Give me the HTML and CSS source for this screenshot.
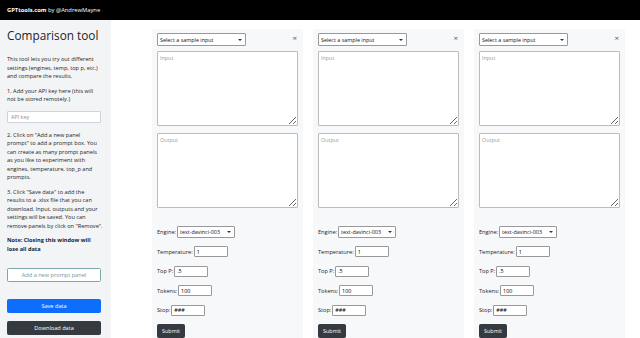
FILE: index.html
```html
<!DOCTYPE html>
<html>
<head>
<meta charset="utf-8">
<link rel="stylesheet" href="styles.css">
</head>
<body>
<div class="topbar"><b>GPTtools.com</b>&nbsp;by @AndrewMayne</div>
<div class="main">
  <aside class="sidebar">
    <h1 class="title">Comparison tool</h1>
    <p class="para">This tool lets you try out different settings (engines, temp, top p, etc.) and compare the results.</p>
    <p class="para">1. Add your API key here (this will not be stored remotely.)</p>
    <input class="api" type="text" placeholder="API key">
    <p class="para">2. Click on "Add a new panel prompt" to add a prompt box. You can create as many prompt panels as you like to experiment with engines, temperature, top_p and prompts.</p>
    <p class="para">3. Click "Save data" to add the results to a .xlsx file that you can download. Input, outputs and your settings will be saved. You can remove panels by click on "Remove".</p>
    <p class="para note">Note: Closing this window will lose all data</p>
    <button class="btn btn-outline">Add a new prompt panel</button>
    <button class="btn btn-blue">Save data</button>
    <button class="btn btn-dark">Download data</button>
  </aside>
  <section class="panels">
    <div class="panel">
      <div class="panel-head">
        <span class="selwrap sample"><select><option>Select a sample input</option></select></span>
        <span class="close">×</span>
      </div>
      <textarea class="area" placeholder="Input"></textarea>
      <textarea class="area" placeholder="Output"></textarea>
      <div class="settings">
        <div class="row"><label>Engine:</label><span class="selwrap engine"><select><option>text-davinci-003</option></select></span></div>
        <div class="row"><label>Temperature:</label><input class="field" type="text" value="1"></div>
        <div class="row"><label>Top P:</label><input class="field" type="text" value=".5"></div>
        <div class="row"><label>Tokens:</label><input class="field" type="text" value="100"></div>
        <div class="row"><label>Stop:</label><input class="field" type="text" value="###"></div>
        <button class="submit">Submit</button>
      </div>
    </div>
    <div class="panel">
      <div class="panel-head">
        <span class="selwrap sample"><select><option>Select a sample input</option></select></span>
        <span class="close">×</span>
      </div>
      <textarea class="area" placeholder="Input"></textarea>
      <textarea class="area" placeholder="Output"></textarea>
      <div class="settings">
        <div class="row"><label>Engine:</label><span class="selwrap engine"><select><option>text-davinci-003</option></select></span></div>
        <div class="row"><label>Temperature:</label><input class="field" type="text" value="1"></div>
        <div class="row"><label>Top P:</label><input class="field" type="text" value=".5"></div>
        <div class="row"><label>Tokens:</label><input class="field" type="text" value="100"></div>
        <div class="row"><label>Stop:</label><input class="field" type="text" value="###"></div>
        <button class="submit">Submit</button>
      </div>
    </div>
    <div class="panel">
      <div class="panel-head">
        <span class="selwrap sample"><select><option>Select a sample input</option></select></span>
        <span class="close">×</span>
      </div>
      <textarea class="area" placeholder="Input"></textarea>
      <textarea class="area" placeholder="Output"></textarea>
      <div class="settings">
        <div class="row"><label>Engine:</label><span class="selwrap engine"><select><option>text-davinci-003</option></select></span></div>
        <div class="row"><label>Temperature:</label><input class="field" type="text" value="1"></div>
        <div class="row"><label>Top P:</label><input class="field" type="text" value=".5"></div>
        <div class="row"><label>Tokens:</label><input class="field" type="text" value="100"></div>
        <div class="row"><label>Stop:</label><input class="field" type="text" value="###"></div>
        <button class="submit">Submit</button>
      </div>
    </div>
  </section>
</div>
</body>
</html>
```
FILE: styles.css
```css
* { box-sizing: border-box; }
html, body { margin: 0; padding: 0; overflow: hidden; }
body {
  font-family: "Open Sans", "Noto Sans", sans-serif;
  font-size: 5.6px;
  color: #212529;
  background: #fff;
  height: 338px;
}
.topbar {
  height: 20px;
  background: #000;
  color: #fff;
  font-size: 5.8px;
  display: flex;
  align-items: center;
  padding-left: 7px;
}
.topbar b { font-weight: 700; }
.main { display: flex; height: 318px; }
.sidebar {
  width: 111px;
  flex: none;
  background: #f3f4f6;
  padding: 7px 8px 0 7px;
  display: flex;
  flex-direction: column;
  align-items: flex-start;
}
.title {
  font-size: 11.8px;
  font-weight: 500;
  margin: 0 0 12px 0;
  line-height: 16px;
  white-space: nowrap;
}
.para {
  margin: 0 0 6px 0;
  line-height: 8.5px;
  font-size: 5.6px;
  color: #212529;
}
.note { font-weight: 700; margin-bottom: 15px; }
.api {
  width: 94px;
  height: 12px;
  border: 1px solid #ced4da;
  border-radius: 1px;
  font: inherit;
  font-size: 5.4px;
  padding: 0 3px;
  margin: 1px 0 8px 0;
  background: #fff;
}
.api::placeholder { color: #8a9096; }
.btn {
  width: 94px;
  height: 14px;
  font: inherit;
  font-size: 5.6px;
  border-radius: 1.5px;
  padding: 0;
  display: block;
  flex: none;
}
.btn-outline {
  background: #fff;
  border: 1px solid #7fa7ae;
  color: #6b97a0;
  margin-bottom: 17px;
}
.btn-blue {
  background: #0d6efd;
  border: 1px solid #0d6efd;
  color: #fff;
  margin-bottom: 8px;
}
.btn-dark {
  background: #343a40;
  border: 1px solid #343a40;
  color: #fff;
}
.panels {
  display: flex;
  gap: 10px;
  padding: 9px 0 0 41px;
  flex: 1;
}
.panel {
  width: 151px;
  flex: none;
  background: #f7f8fa;
  padding: 4px 5px 0 5px;
  display: flex;
  flex-direction: column;
}
.panel-head {
  display: flex;
  justify-content: space-between;
  align-items: flex-start;
  height: 14px;
  margin-bottom: 4px;
}
.selwrap {
  position: relative;
  display: inline-block;
}
.selwrap select {
  appearance: none;
  -webkit-appearance: none;
  width: 100%;
  height: 100%;
  font: inherit;
  font-size: 5.4px;
  border: 1px solid #999;
  border-radius: 1px;
  background: #fff;
  padding: 0 2px;
  color: #111;
  display: block;
}
.selwrap::after {
  content: "";
  position: absolute;
  right: 4px;
  top: 50%;
  margin-top: -1px;
  border-left: 2px solid transparent;
  border-right: 2px solid transparent;
  border-top: 2.5px solid #333;
}
.sample { width: 89px; height: 13px; }
.close {
  font-size: 8px;
  line-height: 8px;
  margin-top: 1px;
  margin-right: 1px;
  color: #555;
}
.area {
  width: 141px;
  height: 76px;
  border: 1px solid #bcbcbc;
  border-radius: 1px;
  font: inherit;
  font-size: 5.4px;
  padding: 2px;
  margin: 0 0 7px 0;
  resize: vertical;
  background: #fff;
  display: block;
}
.area::placeholder { color: #9a9a9a; }
.settings {
  padding-top: 11px;
  display: flex;
  flex-direction: column;
  align-items: flex-start;
}
.row {
  display: flex;
  align-items: center;
  height: 12px;
  margin-bottom: 7.5px;
  font-size: 5.6px;
}
.row label { margin-right: 1px; }
.engine { width: 58px; height: 12px; }
.field {
  width: 34px;
  height: 11px;
  font: inherit;
  font-size: 5.4px;
  border: 1px solid #999;
  border-radius: 1px;
  padding: 0 2px;
  background: #fff;
}
.submit {
  height: 14px;
  width: 28px;
  font: inherit;
  font-size: 5.4px;
  background: #343a40;
  color: #fff;
  border: 1px solid #343a40;
  border-radius: 1.5px;
  padding: 0;
}
```
